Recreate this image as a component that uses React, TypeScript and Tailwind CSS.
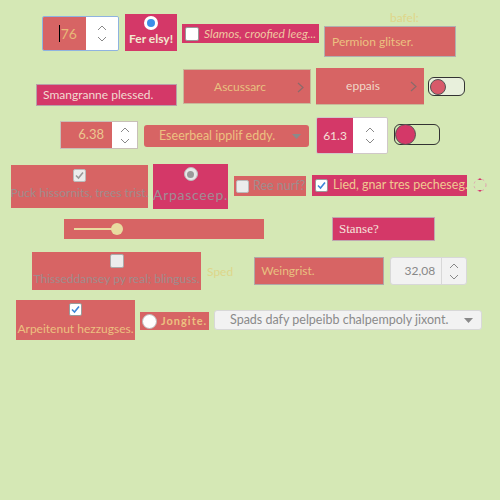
import React from "react";

const Chev = ({ dir }: { dir: "up" | "down" }) => (
  <svg width="10" height="6" viewBox="0 0 10 6" className="block">
    {dir === "up" ? (
      <path d="M1 5 L5 1 L9 5" fill="none" stroke="#888" strokeWidth="1" />
    ) : (
      <path d="M1 1 L5 5 L9 1" fill="none" stroke="#888" strokeWidth="1" />
    )}
  </svg>
);

const Spin = ({ cls }: { cls: string }) => (
  <div className={"flex flex-col items-center justify-center gap-[5px] bg-white " + cls}>
    <Chev dir="up" />
    <Chev dir="down" />
  </div>
);

const Check = ({ checked, disabled }: { checked?: boolean; disabled?: boolean }) => (
  <div
    className={
      "w-[13px] h-[13px] rounded-[2px] border flex items-center justify-center shrink-0 " +
      (disabled ? "bg-[#ececec] border-[#bbbbbb]" : "bg-white border-[#9a9a9a]")
    }
  >
    {checked && (
      <svg width="11" height="11" viewBox="0 0 11 11">
        <path
          d="M2 5.5 L4.5 8 L9 2.5"
          fill="none"
          stroke={disabled ? "#999" : "#3d86d8"}
          strokeWidth="1.6"
        />
      </svg>
    )}
  </div>
);

const Arrow = () => (
  <svg width="9" height="5" viewBox="0 0 9 5">
    <path d="M0 0 L9 0 L4.5 5 Z" fill="#8a8a8a" />
  </svg>
);

const RightChev = () => (
  <svg width="7" height="11" viewBox="0 0 7 11">
    <path d="M1 1 L6 5.5 L1 10" fill="none" stroke="#8a6a6a" strokeWidth="1.2" />
  </svg>
);

export default function App() {
  const font = { fontFamily: 'Lato, "Open Sans", sans-serif' };
  return (
    <div className="w-[500px] h-[500px] bg-[#d5e8b5] overflow-hidden" style={font}>
      {/* Row 1 */}
      <div className="flex items-start pt-[14px] h-[57px]">
        <div className="ml-[42px] mt-[2px] w-[77px] h-[35px] flex border border-[#8fb3e0] rounded-[2px] overflow-hidden shrink-0">
          <div className="w-[43px] bg-[#d76464] flex items-center justify-end pr-[9px] text-[14px] text-[#e8b878]">
            <span className="w-px h-[17px] bg-black mr-[1px]"></span>76
          </div>
          <Spin cls="flex-1" />
        </div>
        <div className="ml-[6px] w-[52px] h-[37px] bg-[#d43868] flex flex-col items-center pt-[2px] shrink-0">
          <div className="w-[14px] h-[14px] rounded-full bg-white flex items-center justify-center">
            <div className="w-[8px] h-[8px] rounded-full bg-[#3d8ee8]"></div>
          </div>
          <div className="text-[12px] font-bold text-[#f2e8d0] mt-[3px] leading-none whitespace-nowrap">Fer elsy!</div>
        </div>
        <div className="ml-[5px] mt-[10px] w-[137px] h-[19px] bg-[#d43868] flex items-center pl-[3px] gap-[5px] shrink-0 overflow-hidden">
          <div className="w-[14px] h-[14px] bg-white border border-[#999] rounded-[2px] shrink-0"></div>
          <span className="text-[12px] italic text-[#f0c8a0] whitespace-nowrap">Slamos, croofied leeg...</span>
        </div>
        <div className="ml-[5px] -mt-[4px] flex flex-col shrink-0">
          <div className="pl-[66px] text-[12px] text-[#dfd68a] leading-[16px]">bafel:</div>
          <div className="w-[132px] h-[31px] bg-[#d76464] border border-[#b0b0b0] flex items-center pl-[7px] text-[12px] text-[#ecc080]">
            Permion glitser.
          </div>
        </div>
      </div>

      {/* Row 2 */}
      <div className="flex items-start mt-[11px] h-[38px]">
        <div className="ml-[36px] mt-[16px] w-[141px] h-[22px] bg-[#d43868] border border-[#b8a0a8] flex items-center pl-[6px] text-[12px] text-[#f2dcd0] whitespace-nowrap shrink-0">
          Smangranne plessed.
        </div>
        <div className="ml-[6px] mt-[1px] w-[128px] h-[35px] bg-[#d76464] border border-[#c9b89a] flex items-center relative text-[12px] text-[#e8c080] shrink-0">
          <span className="flex-1 text-center pr-[14px]">Ascussarc</span>
          <span className="absolute right-[6px] top-[12px]"><RightChev /></span>
        </div>
        <div className="ml-[5px] w-[108px] h-[37px] bg-[#d76464] border-b border-[#c9b89a] flex items-center relative text-[12px] text-[#f0d8c8] shrink-0">
          <span className="flex-1 text-center pr-[14px]">eppais</span>
          <span className="absolute right-[7px] top-[13px]"><RightChev /></span>
        </div>
        <div className="ml-[4px] mt-[9px] w-[37px] h-[19px] rounded-[6px] border border-[#333] bg-[#e8f0dc] flex items-center pl-[1px] shrink-0">
          <div className="w-[16px] h-[16px] rounded-full bg-[#d85a6a] border border-[#555]"></div>
        </div>
      </div>

      {/* Row 3 */}
      <div className="flex items-start mt-[11px] h-[37px]">
        <div className="ml-[60px] mt-[4px] w-[78px] h-[28px] flex border border-[#c8c0b8] overflow-hidden shrink-0">
          <div className="w-[51px] bg-[#d76464] flex items-center justify-end pr-[8px] text-[13px] text-[#ecc890]">6.38</div>
          <Spin cls="flex-1" />
        </div>
        <div className="ml-[6px] mt-[8px] w-[165px] h-[22px] bg-[#d76464] rounded-[3px] flex items-center pl-[15px] pr-[8px] text-[12.5px] text-[#ecc080] shrink-0">
          <span className="flex-1 whitespace-nowrap">Eseerbeal ipplif eddy.</span>
          <Arrow />
        </div>
        <div className="ml-[7px] w-[72px] h-[37px] flex border border-[#d0c8c8] rounded-[2px] overflow-hidden shrink-0">
          <div className="w-[36px] bg-[#d43868] flex items-center justify-center text-[12px] text-[#f4e0d8]">61.3</div>
          <Spin cls="flex-1" />
        </div>
        <div className="ml-[6px] mt-[7px] w-[46px] h-[21px] rounded-[6px] border border-[#333] flex items-center shrink-0">
          <div className="w-[21px] h-[21px] rounded-full bg-[#d43868] border border-[#555]"></div>
        </div>
      </div>

      {/* Row 4 */}
      <div className="flex items-start mt-[10px] h-[45px]">
        <div className="ml-[11px] mt-[1px] w-[137px] h-[43px] bg-[#d76464] flex flex-col items-center pt-[4px] shrink-0">
          <Check checked disabled />
          <div className="text-[12px] text-[#a08c8c] whitespace-nowrap leading-none mt-[5px]">Puck hissornits, trees trist.</div>
        </div>
        <div className="ml-[5px] w-[75px] h-[45px] bg-[#d43868] flex flex-col items-center pt-[3px] shrink-0">
          <div className="w-[14px] h-[14px] rounded-full bg-[#e8e8e8] border border-[#bbb] flex items-center justify-center">
            <div className="w-[7px] h-[7px] rounded-full bg-[#9a9a9a]"></div>
          </div>
          <div className="text-[14px] text-[#a08c94] tracking-[0.7px] whitespace-nowrap leading-none mt-[7px]">Arpasceep.</div>
        </div>
        <div className="ml-[6px] mt-[12px] w-[72px] h-[20px] bg-[#d76464] flex items-center gap-[4px] pl-[2px] shrink-0">
          <Check disabled />
          <span className="text-[12.5px] text-[#a08c8c] whitespace-nowrap">Ree nurf?</span>
        </div>
        <div className="ml-[6px] mt-[11px] w-[155px] h-[21px] bg-[#d43868] flex items-center gap-[5px] pl-[3px] shrink-0">
          <Check checked />
          <span className="text-[12.5px] text-[#f0c890] whitespace-nowrap">Lied, gnar tres pecheseg.</span>
        </div>
        <div className="ml-[5px] mt-[13px] shrink-0">
          <svg width="16" height="16" viewBox="0 0 16 16">
            <circle cx="8" cy="8" r="6" fill="none" stroke="#e0a0b0" strokeWidth="1" strokeDasharray="2 3" />
            <path d="M6 3 L8 1 L10 3 Z" fill="#d43868" />
            <path d="M6 13 L8 15 L10 13 Z" fill="#d43868" />
          </svg>
        </div>
      </div>

      {/* Row 5 */}
      <div className="flex items-start mt-[8px] h-[24px]">
        <div className="ml-[64px] mt-[2px] w-[200px] h-[20px] bg-[#d76464] flex items-center pl-[10px] shrink-0">
          <div className="w-[43px] h-[2px] bg-[#e8dca0]"></div>
          <div className="w-[12px] h-[12px] rounded-full bg-[#e8dca0] -ml-[6px]"></div>
        </div>
        <div
          className="ml-[68px] w-[103px] h-[24px] bg-[#d43868] border border-[#c0a8b0] flex items-center pl-[6px] text-[13px] text-[#f4e4dc] shrink-0"
          style={{ fontFamily: '"Liberation Serif", "DejaVu Serif", serif' }}
        >
          Stanse?
        </div>
      </div>

      {/* Row 6 */}
      <div className="flex items-start mt-[11px] h-[38px]">
        <div className="ml-[32px] w-[169px] h-[38px] bg-[#d76464] flex flex-col items-center pt-[2px] shrink-0">
          <div className="w-[14px] h-[14px] rounded-[2px] bg-[#ececec] border border-[#aaa]"></div>
          <div className="text-[12px] text-[#a08c8c] whitespace-nowrap leading-none mt-[5px]">Thisseddansey py real; blinguss.</div>
        </div>
        <div className="ml-[6px] mt-[11px] text-[12px] text-[#ded68a] shrink-0">Sped</div>
        <div className="ml-[21px] mt-[5px] w-[130px] h-[28px] bg-[#d76464] border border-[#b0a8a8] flex items-center pl-[6px] text-[12px] text-[#e8c080] shrink-0">
          Weingrist.
        </div>
        <div className="ml-[6px] mt-[5px] w-[77px] h-[28px] flex border border-[#d8d8d8] rounded-[3px] overflow-hidden bg-[#f2f2f2] shrink-0">
          <div className="w-[50px] flex items-center justify-end pr-[6px] text-[12px] text-[#888]">32,08</div>
          <div className="flex-1 flex flex-col items-center justify-center gap-[5px] border-l border-[#d8d8d8]">
            <Chev dir="up" />
            <Chev dir="down" />
          </div>
        </div>
      </div>

      {/* Row 7 */}
      <div className="flex items-start mt-[10px] h-[40px]">
        <div className="ml-[16px] w-[119px] h-[40px] bg-[#d76464] flex flex-col items-center pt-[3px] shrink-0">
          <Check checked />
          <div className="text-[12px] text-[#ecc080] whitespace-nowrap leading-none mt-[7px]">Arpeitenut hezzugses.</div>
        </div>
        <div className="ml-[5px] mt-[12px] w-[69px] h-[18px] bg-[#d76464] flex items-center pl-[2px] gap-[4px] shrink-0">
          <div className="w-[15px] h-[15px] rounded-full bg-white border border-[#bbb] shrink-0"></div>
          <span className="text-[11px] font-bold tracking-[1px] text-[#ecc080] whitespace-nowrap">Jongite.</span>
        </div>
        <div className="ml-[5px] mt-[10px] w-[268px] h-[20px] bg-[#f2f2f2] border border-[#d8d8d8] rounded-[3px] flex items-center pl-[15px] pr-[8px] text-[12.5px] text-[#8a8a8a] shrink-0">
          <span className="flex-1 whitespace-nowrap">Spads dafy pelpeibb chalpempoly jixont.</span>
          <Arrow />
        </div>
      </div>
    </div>
  );
}
